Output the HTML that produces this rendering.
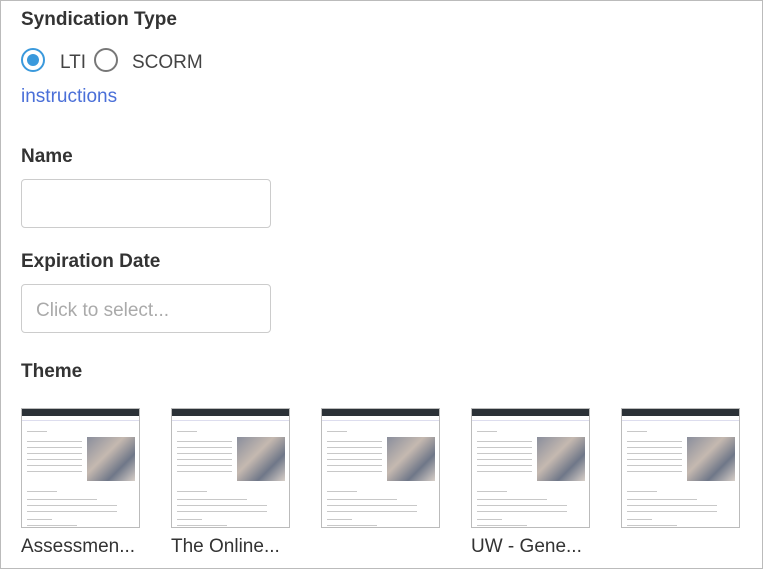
<!DOCTYPE html>
<html><head><style>
html,body{margin:0;padding:0;}
body{width:763px;height:570px;background:#fff;font-family:"Segoe UI","Liberation Sans",sans-serif;color:#333;position:relative;overflow:hidden}
.frame{position:absolute;left:0;top:0;width:761px;height:567px;border:1px solid #bbb;}
.lbl{position:absolute;left:21px;font-weight:bold;font-size:19px;color:#333}
.inp{position:absolute;left:21px;width:250px;height:49px;border:1px solid #ccc;border-radius:4px;box-sizing:border-box}
.radio{position:absolute;width:24px;height:24px;border-radius:50%;box-sizing:border-box}
.thumb{position:absolute;top:408px;width:119px;height:120px;border:1px solid #bbb;box-sizing:border-box;background:#fff;overflow:hidden}
.thumb .hd{height:7px;background:#2b3137}
.thumb .sub{height:4px;border-bottom:1px solid #dde;}
.thumb .img{position:absolute;left:65px;top:28px;width:48px;height:44px;background:linear-gradient(135deg,#8a8e9c,#c5b9b0 40%,#6f7788 70%,#d8cfc8)}
.ln{position:absolute;left:5px;height:1px;background:#c8c8c8}
.cap{position:absolute;top:536px;font-size:19px;color:#333}
</style></head><body>
<div class="frame"></div>
<div class="lbl" style="top:9px">Syndication Type</div>
<div class="radio" style="left:21px;top:48px;border:2px solid #3a99dc"><div style="position:absolute;left:4px;top:4px;width:12px;height:12px;border-radius:50%;background:#3a99dc"></div></div>
<div style="position:absolute;left:60px;top:52px;font-size:19px;color:#444">LTI</div>
<div class="radio" style="left:94px;top:48px;border:2px solid #777"></div>
<div style="position:absolute;left:132px;top:52px;font-size:19px;color:#444">SCORM</div>
<div style="position:absolute;left:21px;top:86px;font-size:19px;color:#4a6fd8">instructions</div>
<div class="lbl" style="top:146px">Name</div>
<div class="inp" style="top:179px"></div>
<div class="lbl" style="top:251px">Expiration Date</div>
<div class="inp" style="top:284px"><div style="position:absolute;left:14px;top:15px;font-size:19px;color:#aaa">Click to select...</div></div>
<div class="lbl" style="top:361px">Theme</div>

<div class="thumb" style="left:21px"><div class="hd"></div><div class="sub"></div><div class="img"></div><div class="ln" style="top:22px;width:20px"></div><div class="ln" style="top:32px;width:55px"></div><div class="ln" style="top:38px;width:55px"></div><div class="ln" style="top:44px;width:55px"></div><div class="ln" style="top:50px;width:55px"></div><div class="ln" style="top:56px;width:55px"></div><div class="ln" style="top:62px;width:55px"></div><div class="ln" style="top:82px;width:30px"></div><div class="ln" style="top:90px;width:70px"></div><div class="ln" style="top:96px;width:90px"></div><div class="ln" style="top:102px;width:90px"></div><div class="ln" style="top:110px;width:25px"></div><div class="ln" style="top:116px;width:50px"></div></div>
<div class="thumb" style="left:171px"><div class="hd"></div><div class="sub"></div><div class="img"></div><div class="ln" style="top:22px;width:20px"></div><div class="ln" style="top:32px;width:55px"></div><div class="ln" style="top:38px;width:55px"></div><div class="ln" style="top:44px;width:55px"></div><div class="ln" style="top:50px;width:55px"></div><div class="ln" style="top:56px;width:55px"></div><div class="ln" style="top:62px;width:55px"></div><div class="ln" style="top:82px;width:30px"></div><div class="ln" style="top:90px;width:70px"></div><div class="ln" style="top:96px;width:90px"></div><div class="ln" style="top:102px;width:90px"></div><div class="ln" style="top:110px;width:25px"></div><div class="ln" style="top:116px;width:50px"></div></div>
<div class="thumb" style="left:321px"><div class="hd"></div><div class="sub"></div><div class="img"></div><div class="ln" style="top:22px;width:20px"></div><div class="ln" style="top:32px;width:55px"></div><div class="ln" style="top:38px;width:55px"></div><div class="ln" style="top:44px;width:55px"></div><div class="ln" style="top:50px;width:55px"></div><div class="ln" style="top:56px;width:55px"></div><div class="ln" style="top:62px;width:55px"></div><div class="ln" style="top:82px;width:30px"></div><div class="ln" style="top:90px;width:70px"></div><div class="ln" style="top:96px;width:90px"></div><div class="ln" style="top:102px;width:90px"></div><div class="ln" style="top:110px;width:25px"></div><div class="ln" style="top:116px;width:50px"></div></div>
<div class="thumb" style="left:471px"><div class="hd"></div><div class="sub"></div><div class="img"></div><div class="ln" style="top:22px;width:20px"></div><div class="ln" style="top:32px;width:55px"></div><div class="ln" style="top:38px;width:55px"></div><div class="ln" style="top:44px;width:55px"></div><div class="ln" style="top:50px;width:55px"></div><div class="ln" style="top:56px;width:55px"></div><div class="ln" style="top:62px;width:55px"></div><div class="ln" style="top:82px;width:30px"></div><div class="ln" style="top:90px;width:70px"></div><div class="ln" style="top:96px;width:90px"></div><div class="ln" style="top:102px;width:90px"></div><div class="ln" style="top:110px;width:25px"></div><div class="ln" style="top:116px;width:50px"></div></div>
<div class="thumb" style="left:621px"><div class="hd"></div><div class="sub"></div><div class="img"></div><div class="ln" style="top:22px;width:20px"></div><div class="ln" style="top:32px;width:55px"></div><div class="ln" style="top:38px;width:55px"></div><div class="ln" style="top:44px;width:55px"></div><div class="ln" style="top:50px;width:55px"></div><div class="ln" style="top:56px;width:55px"></div><div class="ln" style="top:62px;width:55px"></div><div class="ln" style="top:82px;width:30px"></div><div class="ln" style="top:90px;width:70px"></div><div class="ln" style="top:96px;width:90px"></div><div class="ln" style="top:102px;width:90px"></div><div class="ln" style="top:110px;width:25px"></div><div class="ln" style="top:116px;width:50px"></div></div>

<div class="cap" style="left:21px">Assessmen...</div>
<div class="cap" style="left:171px">The Online...</div>
<div class="cap" style="left:471px">UW - Gene...</div>
</body></html>
